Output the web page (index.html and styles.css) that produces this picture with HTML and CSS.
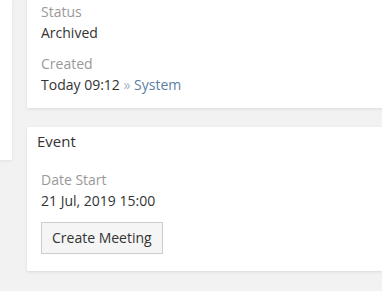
FILE: index.html
```html
<!DOCTYPE html>
<html lang="en">
<head>
    <meta charset="UTF-8">
    <meta name="viewport" content="width=device-width, initial-scale=1.0">
    <title>Record Detail</title>
    <link rel="stylesheet" href="styles.css">
</head>
<body>
    <div class="layout">
        <div class="side-panel"></div>

        <div class="main">
            <div class="card card-top">
                <div class="field">
                    <div class="label">Status</div>
                    <div class="value">Archived</div>
                </div>
                <div class="field">
                    <div class="label">Created</div>
                    <div class="value">Today 09:12 <span class="sep">&raquo;</span> <a class="user" href="#">System</a></div>
                </div>
            </div>

            <div class="card">
                <div class="card-header">Event</div>
                <div class="card-body">
                    <div class="field">
                        <div class="label">Date Start</div>
                        <div class="value">21 Jul, 2019 15:00</div>
                    </div>
                    <button class="button">Create Meeting</button>
                </div>
            </div>
        </div>
    </div>
</body>
</html>
```

FILE: styles.css
```css
body {
    font-family: "Open Sans", "Liberation Sans", sans-serif;
    font-size: 14px;
    color: #333;
    background-color: #f2f2f2;
    margin: 0;
    overflow: hidden;
}

.layout {
    display: flex;
    align-items: flex-start;
}

/* Left panel, mostly scrolled out of view */
.side-panel {
    width: 12px;
    height: 160px;
    background: #fff;
    box-shadow: 0 1px 3px rgba(0, 0, 0, 0.08);
    flex-shrink: 0;
}

.main {
    flex: 1;
    margin-left: 15px;
    margin-right: -10px;
}

.card {
    background: #fff;
    box-shadow: 0 1px 3px rgba(0, 0, 0, 0.1);
    margin-bottom: 19px;
}
.card-top {
    margin-top: -13px;
    padding: 14px 14px 13px;
}

.card-header {
    font-size: 15px;
    line-height: 20px;
    padding: 4px 10px 6px;
}
.card-body {
    padding: 12px 14px 17px;
}

.field {
    line-height: 21px;
    margin-bottom: 10px;
}
.card-top .field:last-child {
    margin-bottom: 0;
}
.card-body .field {
    margin-bottom: 11px;
}
.label {
    color: #999;
}
.value {
    color: #333;
}
.sep {
    color: #9fb3c8;
}
.user {
    color: #5a7fa6;
    text-decoration: none;
}

.button {
    font-family: inherit;
    font-size: 14px;
    line-height: 20px;
    color: #333;
    background-color: #f5f5f5;
    border: 1px solid #ccc;
    padding: 5px 10px;
    border-radius: 0;
    cursor: pointer;
}
```
